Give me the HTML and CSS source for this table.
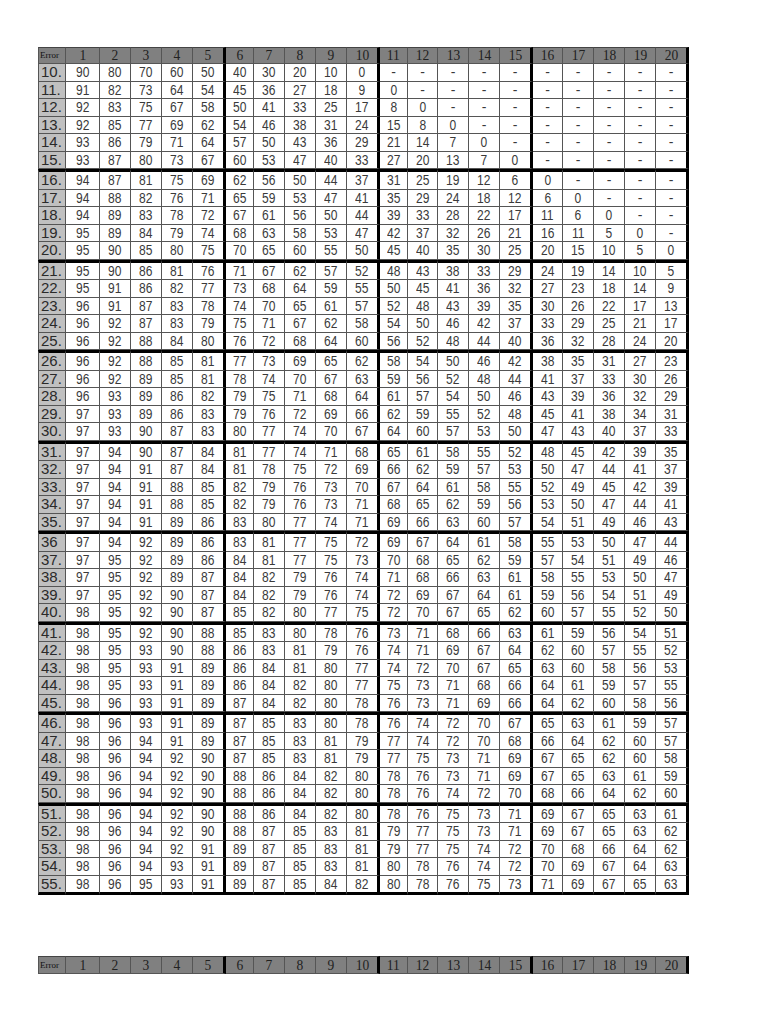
FILE: index.html
```
<!DOCTYPE html>
<html>
<head>
<meta charset="utf-8">
<link rel="stylesheet" href="styles.css">
</head>
<body>
<div class="page">
<table class="grid">
<colgroup><col class="w28"><col class="w34"><col class="w31"><col class="w31"><col class="w31"><col class="w33"><col class="w28"><col class="w31"><col class="w31"><col class="w31"><col class="w33"><col class="w28"><col class="w30"><col class="w31"><col class="w31"><col class="w33"><col class="w30"><col class="w31"><col class="w31"><col class="w31"><col class="w33"></colgroup>
<thead><tr><th class="err">Error</th><th><span>1</span></th><th><span>2</span></th><th><span>3</span></th><th><span>4</span></th><th><span>5</span></th><th><span>6</span></th><th><span>7</span></th><th><span>8</span></th><th><span>9</span></th><th><span>10</span></th><th><span>11</span></th><th><span>12</span></th><th><span>13</span></th><th><span>14</span></th><th><span>15</span></th><th><span>16</span></th><th><span>17</span></th><th><span>18</span></th><th><span>19</span></th><th><span>20</span></th></tr></thead>
<tbody>
<tr><th>10.</th><td><span>90</span></td><td><span>80</span></td><td><span>70</span></td><td><span>60</span></td><td><span>50</span></td><td><span>40</span></td><td><span>30</span></td><td><span>20</span></td><td><span>10</span></td><td><span>0</span></td><td>-</td><td>-</td><td>-</td><td>-</td><td>-</td><td>-</td><td>-</td><td>-</td><td>-</td><td>-</td></tr>
<tr><th>11.</th><td><span>91</span></td><td><span>82</span></td><td><span>73</span></td><td><span>64</span></td><td><span>54</span></td><td><span>45</span></td><td><span>36</span></td><td><span>27</span></td><td><span>18</span></td><td><span>9</span></td><td><span>0</span></td><td>-</td><td>-</td><td>-</td><td>-</td><td>-</td><td>-</td><td>-</td><td>-</td><td>-</td></tr>
<tr><th>12.</th><td><span>92</span></td><td><span>83</span></td><td><span>75</span></td><td><span>67</span></td><td><span>58</span></td><td><span>50</span></td><td><span>41</span></td><td><span>33</span></td><td><span>25</span></td><td><span>17</span></td><td><span>8</span></td><td><span>0</span></td><td>-</td><td>-</td><td>-</td><td>-</td><td>-</td><td>-</td><td>-</td><td>-</td></tr>
<tr><th>13.</th><td><span>92</span></td><td><span>85</span></td><td><span>77</span></td><td><span>69</span></td><td><span>62</span></td><td><span>54</span></td><td><span>46</span></td><td><span>38</span></td><td><span>31</span></td><td><span>24</span></td><td><span>15</span></td><td><span>8</span></td><td><span>0</span></td><td>-</td><td>-</td><td>-</td><td>-</td><td>-</td><td>-</td><td>-</td></tr>
<tr><th>14.</th><td><span>93</span></td><td><span>86</span></td><td><span>79</span></td><td><span>71</span></td><td><span>64</span></td><td><span>57</span></td><td><span>50</span></td><td><span>43</span></td><td><span>36</span></td><td><span>29</span></td><td><span>21</span></td><td><span>14</span></td><td><span>7</span></td><td><span>0</span></td><td>-</td><td>-</td><td>-</td><td>-</td><td>-</td><td>-</td></tr>
<tr><th>15.</th><td><span>93</span></td><td><span>87</span></td><td><span>80</span></td><td><span>73</span></td><td><span>67</span></td><td><span>60</span></td><td><span>53</span></td><td><span>47</span></td><td><span>40</span></td><td><span>33</span></td><td><span>27</span></td><td><span>20</span></td><td><span>13</span></td><td><span>7</span></td><td><span>0</span></td><td>-</td><td>-</td><td>-</td><td>-</td><td>-</td></tr>
</tbody>
<tbody>
<tr><th>16.</th><td><span>94</span></td><td><span>87</span></td><td><span>81</span></td><td><span>75</span></td><td><span>69</span></td><td><span>62</span></td><td><span>56</span></td><td><span>50</span></td><td><span>44</span></td><td><span>37</span></td><td><span>31</span></td><td><span>25</span></td><td><span>19</span></td><td><span>12</span></td><td><span>6</span></td><td><span>0</span></td><td>-</td><td>-</td><td>-</td><td>-</td></tr>
<tr><th>17.</th><td><span>94</span></td><td><span>88</span></td><td><span>82</span></td><td><span>76</span></td><td><span>71</span></td><td><span>65</span></td><td><span>59</span></td><td><span>53</span></td><td><span>47</span></td><td><span>41</span></td><td><span>35</span></td><td><span>29</span></td><td><span>24</span></td><td><span>18</span></td><td><span>12</span></td><td><span>6</span></td><td><span>0</span></td><td>-</td><td>-</td><td>-</td></tr>
<tr><th>18.</th><td><span>94</span></td><td><span>89</span></td><td><span>83</span></td><td><span>78</span></td><td><span>72</span></td><td><span>67</span></td><td><span>61</span></td><td><span>56</span></td><td><span>50</span></td><td><span>44</span></td><td><span>39</span></td><td><span>33</span></td><td><span>28</span></td><td><span>22</span></td><td><span>17</span></td><td><span>11</span></td><td><span>6</span></td><td><span>0</span></td><td>-</td><td>-</td></tr>
<tr><th>19.</th><td><span>95</span></td><td><span>89</span></td><td><span>84</span></td><td><span>79</span></td><td><span>74</span></td><td><span>68</span></td><td><span>63</span></td><td><span>58</span></td><td><span>53</span></td><td><span>47</span></td><td><span>42</span></td><td><span>37</span></td><td><span>32</span></td><td><span>26</span></td><td><span>21</span></td><td><span>16</span></td><td><span>11</span></td><td><span>5</span></td><td><span>0</span></td><td>-</td></tr>
<tr><th>20.</th><td><span>95</span></td><td><span>90</span></td><td><span>85</span></td><td><span>80</span></td><td><span>75</span></td><td><span>70</span></td><td><span>65</span></td><td><span>60</span></td><td><span>55</span></td><td><span>50</span></td><td><span>45</span></td><td><span>40</span></td><td><span>35</span></td><td><span>30</span></td><td><span>25</span></td><td><span>20</span></td><td><span>15</span></td><td><span>10</span></td><td><span>5</span></td><td><span>0</span></td></tr>
</tbody>
<tbody>
<tr><th>21.</th><td><span>95</span></td><td><span>90</span></td><td><span>86</span></td><td><span>81</span></td><td><span>76</span></td><td><span>71</span></td><td><span>67</span></td><td><span>62</span></td><td><span>57</span></td><td><span>52</span></td><td><span>48</span></td><td><span>43</span></td><td><span>38</span></td><td><span>33</span></td><td><span>29</span></td><td><span>24</span></td><td><span>19</span></td><td><span>14</span></td><td><span>10</span></td><td><span>5</span></td></tr>
<tr><th>22.</th><td><span>95</span></td><td><span>91</span></td><td><span>86</span></td><td><span>82</span></td><td><span>77</span></td><td><span>73</span></td><td><span>68</span></td><td><span>64</span></td><td><span>59</span></td><td><span>55</span></td><td><span>50</span></td><td><span>45</span></td><td><span>41</span></td><td><span>36</span></td><td><span>32</span></td><td><span>27</span></td><td><span>23</span></td><td><span>18</span></td><td><span>14</span></td><td><span>9</span></td></tr>
<tr><th>23.</th><td><span>96</span></td><td><span>91</span></td><td><span>87</span></td><td><span>83</span></td><td><span>78</span></td><td><span>74</span></td><td><span>70</span></td><td><span>65</span></td><td><span>61</span></td><td><span>57</span></td><td><span>52</span></td><td><span>48</span></td><td><span>43</span></td><td><span>39</span></td><td><span>35</span></td><td><span>30</span></td><td><span>26</span></td><td><span>22</span></td><td><span>17</span></td><td><span>13</span></td></tr>
<tr><th>24.</th><td><span>96</span></td><td><span>92</span></td><td><span>87</span></td><td><span>83</span></td><td><span>79</span></td><td><span>75</span></td><td><span>71</span></td><td><span>67</span></td><td><span>62</span></td><td><span>58</span></td><td><span>54</span></td><td><span>50</span></td><td><span>46</span></td><td><span>42</span></td><td><span>37</span></td><td><span>33</span></td><td><span>29</span></td><td><span>25</span></td><td><span>21</span></td><td><span>17</span></td></tr>
<tr><th>25.</th><td><span>96</span></td><td><span>92</span></td><td><span>88</span></td><td><span>84</span></td><td><span>80</span></td><td><span>76</span></td><td><span>72</span></td><td><span>68</span></td><td><span>64</span></td><td><span>60</span></td><td><span>56</span></td><td><span>52</span></td><td><span>48</span></td><td><span>44</span></td><td><span>40</span></td><td><span>36</span></td><td><span>32</span></td><td><span>28</span></td><td><span>24</span></td><td><span>20</span></td></tr>
</tbody>
<tbody>
<tr><th>26.</th><td><span>96</span></td><td><span>92</span></td><td><span>88</span></td><td><span>85</span></td><td><span>81</span></td><td><span>77</span></td><td><span>73</span></td><td><span>69</span></td><td><span>65</span></td><td><span>62</span></td><td><span>58</span></td><td><span>54</span></td><td><span>50</span></td><td><span>46</span></td><td><span>42</span></td><td><span>38</span></td><td><span>35</span></td><td><span>31</span></td><td><span>27</span></td><td><span>23</span></td></tr>
<tr><th>27.</th><td><span>96</span></td><td><span>92</span></td><td><span>89</span></td><td><span>85</span></td><td><span>81</span></td><td><span>78</span></td><td><span>74</span></td><td><span>70</span></td><td><span>67</span></td><td><span>63</span></td><td><span>59</span></td><td><span>56</span></td><td><span>52</span></td><td><span>48</span></td><td><span>44</span></td><td><span>41</span></td><td><span>37</span></td><td><span>33</span></td><td><span>30</span></td><td><span>26</span></td></tr>
<tr><th>28.</th><td><span>96</span></td><td><span>93</span></td><td><span>89</span></td><td><span>86</span></td><td><span>82</span></td><td><span>79</span></td><td><span>75</span></td><td><span>71</span></td><td><span>68</span></td><td><span>64</span></td><td><span>61</span></td><td><span>57</span></td><td><span>54</span></td><td><span>50</span></td><td><span>46</span></td><td><span>43</span></td><td><span>39</span></td><td><span>36</span></td><td><span>32</span></td><td><span>29</span></td></tr>
<tr><th>29.</th><td><span>97</span></td><td><span>93</span></td><td><span>89</span></td><td><span>86</span></td><td><span>83</span></td><td><span>79</span></td><td><span>76</span></td><td><span>72</span></td><td><span>69</span></td><td><span>66</span></td><td><span>62</span></td><td><span>59</span></td><td><span>55</span></td><td><span>52</span></td><td><span>48</span></td><td><span>45</span></td><td><span>41</span></td><td><span>38</span></td><td><span>34</span></td><td><span>31</span></td></tr>
<tr><th>30.</th><td><span>97</span></td><td><span>93</span></td><td><span>90</span></td><td><span>87</span></td><td><span>83</span></td><td><span>80</span></td><td><span>77</span></td><td><span>74</span></td><td><span>70</span></td><td><span>67</span></td><td><span>64</span></td><td><span>60</span></td><td><span>57</span></td><td><span>53</span></td><td><span>50</span></td><td><span>47</span></td><td><span>43</span></td><td><span>40</span></td><td><span>37</span></td><td><span>33</span></td></tr>
</tbody>
<tbody>
<tr><th>31.</th><td><span>97</span></td><td><span>94</span></td><td><span>90</span></td><td><span>87</span></td><td><span>84</span></td><td><span>81</span></td><td><span>77</span></td><td><span>74</span></td><td><span>71</span></td><td><span>68</span></td><td><span>65</span></td><td><span>61</span></td><td><span>58</span></td><td><span>55</span></td><td><span>52</span></td><td><span>48</span></td><td><span>45</span></td><td><span>42</span></td><td><span>39</span></td><td><span>35</span></td></tr>
<tr><th>32.</th><td><span>97</span></td><td><span>94</span></td><td><span>91</span></td><td><span>87</span></td><td><span>84</span></td><td><span>81</span></td><td><span>78</span></td><td><span>75</span></td><td><span>72</span></td><td><span>69</span></td><td><span>66</span></td><td><span>62</span></td><td><span>59</span></td><td><span>57</span></td><td><span>53</span></td><td><span>50</span></td><td><span>47</span></td><td><span>44</span></td><td><span>41</span></td><td><span>37</span></td></tr>
<tr><th>33.</th><td><span>97</span></td><td><span>94</span></td><td><span>91</span></td><td><span>88</span></td><td><span>85</span></td><td><span>82</span></td><td><span>79</span></td><td><span>76</span></td><td><span>73</span></td><td><span>70</span></td><td><span>67</span></td><td><span>64</span></td><td><span>61</span></td><td><span>58</span></td><td><span>55</span></td><td><span>52</span></td><td><span>49</span></td><td><span>45</span></td><td><span>42</span></td><td><span>39</span></td></tr>
<tr><th>34.</th><td><span>97</span></td><td><span>94</span></td><td><span>91</span></td><td><span>88</span></td><td><span>85</span></td><td><span>82</span></td><td><span>79</span></td><td><span>76</span></td><td><span>73</span></td><td><span>71</span></td><td><span>68</span></td><td><span>65</span></td><td><span>62</span></td><td><span>59</span></td><td><span>56</span></td><td><span>53</span></td><td><span>50</span></td><td><span>47</span></td><td><span>44</span></td><td><span>41</span></td></tr>
<tr><th>35.</th><td><span>97</span></td><td><span>94</span></td><td><span>91</span></td><td><span>89</span></td><td><span>86</span></td><td><span>83</span></td><td><span>80</span></td><td><span>77</span></td><td><span>74</span></td><td><span>71</span></td><td><span>69</span></td><td><span>66</span></td><td><span>63</span></td><td><span>60</span></td><td><span>57</span></td><td><span>54</span></td><td><span>51</span></td><td><span>49</span></td><td><span>46</span></td><td><span>43</span></td></tr>
</tbody>
<tbody>
<tr><th>36</th><td><span>97</span></td><td><span>94</span></td><td><span>92</span></td><td><span>89</span></td><td><span>86</span></td><td><span>83</span></td><td><span>81</span></td><td><span>77</span></td><td><span>75</span></td><td><span>72</span></td><td><span>69</span></td><td><span>67</span></td><td><span>64</span></td><td><span>61</span></td><td><span>58</span></td><td><span>55</span></td><td><span>53</span></td><td><span>50</span></td><td><span>47</span></td><td><span>44</span></td></tr>
<tr><th>37.</th><td><span>97</span></td><td><span>95</span></td><td><span>92</span></td><td><span>89</span></td><td><span>86</span></td><td><span>84</span></td><td><span>81</span></td><td><span>77</span></td><td><span>75</span></td><td><span>73</span></td><td><span>70</span></td><td><span>68</span></td><td><span>65</span></td><td><span>62</span></td><td><span>59</span></td><td><span>57</span></td><td><span>54</span></td><td><span>51</span></td><td><span>49</span></td><td><span>46</span></td></tr>
<tr><th>38.</th><td><span>97</span></td><td><span>95</span></td><td><span>92</span></td><td><span>89</span></td><td><span>87</span></td><td><span>84</span></td><td><span>82</span></td><td><span>79</span></td><td><span>76</span></td><td><span>74</span></td><td><span>71</span></td><td><span>68</span></td><td><span>66</span></td><td><span>63</span></td><td><span>61</span></td><td><span>58</span></td><td><span>55</span></td><td><span>53</span></td><td><span>50</span></td><td><span>47</span></td></tr>
<tr><th>39.</th><td><span>97</span></td><td><span>95</span></td><td><span>92</span></td><td><span>90</span></td><td><span>87</span></td><td><span>84</span></td><td><span>82</span></td><td><span>79</span></td><td><span>76</span></td><td><span>74</span></td><td><span>72</span></td><td><span>69</span></td><td><span>67</span></td><td><span>64</span></td><td><span>61</span></td><td><span>59</span></td><td><span>56</span></td><td><span>54</span></td><td><span>51</span></td><td><span>49</span></td></tr>
<tr><th>40.</th><td><span>98</span></td><td><span>95</span></td><td><span>92</span></td><td><span>90</span></td><td><span>87</span></td><td><span>85</span></td><td><span>82</span></td><td><span>80</span></td><td><span>77</span></td><td><span>75</span></td><td><span>72</span></td><td><span>70</span></td><td><span>67</span></td><td><span>65</span></td><td><span>62</span></td><td><span>60</span></td><td><span>57</span></td><td><span>55</span></td><td><span>52</span></td><td><span>50</span></td></tr>
</tbody>
<tbody>
<tr><th>41.</th><td><span>98</span></td><td><span>95</span></td><td><span>92</span></td><td><span>90</span></td><td><span>88</span></td><td><span>85</span></td><td><span>83</span></td><td><span>80</span></td><td><span>78</span></td><td><span>76</span></td><td><span>73</span></td><td><span>71</span></td><td><span>68</span></td><td><span>66</span></td><td><span>63</span></td><td><span>61</span></td><td><span>59</span></td><td><span>56</span></td><td><span>54</span></td><td><span>51</span></td></tr>
<tr><th>42.</th><td><span>98</span></td><td><span>95</span></td><td><span>93</span></td><td><span>90</span></td><td><span>88</span></td><td><span>86</span></td><td><span>83</span></td><td><span>81</span></td><td><span>79</span></td><td><span>76</span></td><td><span>74</span></td><td><span>71</span></td><td><span>69</span></td><td><span>67</span></td><td><span>64</span></td><td><span>62</span></td><td><span>60</span></td><td><span>57</span></td><td><span>55</span></td><td><span>52</span></td></tr>
<tr><th>43.</th><td><span>98</span></td><td><span>95</span></td><td><span>93</span></td><td><span>91</span></td><td><span>89</span></td><td><span>86</span></td><td><span>84</span></td><td><span>81</span></td><td><span>80</span></td><td><span>77</span></td><td><span>74</span></td><td><span>72</span></td><td><span>70</span></td><td><span>67</span></td><td><span>65</span></td><td><span>63</span></td><td><span>60</span></td><td><span>58</span></td><td><span>56</span></td><td><span>53</span></td></tr>
<tr><th>44.</th><td><span>98</span></td><td><span>95</span></td><td><span>93</span></td><td><span>91</span></td><td><span>89</span></td><td><span>86</span></td><td><span>84</span></td><td><span>82</span></td><td><span>80</span></td><td><span>77</span></td><td><span>75</span></td><td><span>73</span></td><td><span>71</span></td><td><span>68</span></td><td><span>66</span></td><td><span>64</span></td><td><span>61</span></td><td><span>59</span></td><td><span>57</span></td><td><span>55</span></td></tr>
<tr><th>45.</th><td><span>98</span></td><td><span>96</span></td><td><span>93</span></td><td><span>91</span></td><td><span>89</span></td><td><span>87</span></td><td><span>84</span></td><td><span>82</span></td><td><span>80</span></td><td><span>78</span></td><td><span>76</span></td><td><span>73</span></td><td><span>71</span></td><td><span>69</span></td><td><span>66</span></td><td><span>64</span></td><td><span>62</span></td><td><span>60</span></td><td><span>58</span></td><td><span>56</span></td></tr>
</tbody>
<tbody>
<tr><th>46.</th><td><span>98</span></td><td><span>96</span></td><td><span>93</span></td><td><span>91</span></td><td><span>89</span></td><td><span>87</span></td><td><span>85</span></td><td><span>83</span></td><td><span>80</span></td><td><span>78</span></td><td><span>76</span></td><td><span>74</span></td><td><span>72</span></td><td><span>70</span></td><td><span>67</span></td><td><span>65</span></td><td><span>63</span></td><td><span>61</span></td><td><span>59</span></td><td><span>57</span></td></tr>
<tr><th>47.</th><td><span>98</span></td><td><span>96</span></td><td><span>94</span></td><td><span>91</span></td><td><span>89</span></td><td><span>87</span></td><td><span>85</span></td><td><span>83</span></td><td><span>81</span></td><td><span>79</span></td><td><span>77</span></td><td><span>74</span></td><td><span>72</span></td><td><span>70</span></td><td><span>68</span></td><td><span>66</span></td><td><span>64</span></td><td><span>62</span></td><td><span>60</span></td><td><span>57</span></td></tr>
<tr><th>48.</th><td><span>98</span></td><td><span>96</span></td><td><span>94</span></td><td><span>92</span></td><td><span>90</span></td><td><span>87</span></td><td><span>85</span></td><td><span>83</span></td><td><span>81</span></td><td><span>79</span></td><td><span>77</span></td><td><span>75</span></td><td><span>73</span></td><td><span>71</span></td><td><span>69</span></td><td><span>67</span></td><td><span>65</span></td><td><span>62</span></td><td><span>60</span></td><td><span>58</span></td></tr>
<tr><th>49.</th><td><span>98</span></td><td><span>96</span></td><td><span>94</span></td><td><span>92</span></td><td><span>90</span></td><td><span>88</span></td><td><span>86</span></td><td><span>84</span></td><td><span>82</span></td><td><span>80</span></td><td><span>78</span></td><td><span>76</span></td><td><span>73</span></td><td><span>71</span></td><td><span>69</span></td><td><span>67</span></td><td><span>65</span></td><td><span>63</span></td><td><span>61</span></td><td><span>59</span></td></tr>
<tr><th>50.</th><td><span>98</span></td><td><span>96</span></td><td><span>94</span></td><td><span>92</span></td><td><span>90</span></td><td><span>88</span></td><td><span>86</span></td><td><span>84</span></td><td><span>82</span></td><td><span>80</span></td><td><span>78</span></td><td><span>76</span></td><td><span>74</span></td><td><span>72</span></td><td><span>70</span></td><td><span>68</span></td><td><span>66</span></td><td><span>64</span></td><td><span>62</span></td><td><span>60</span></td></tr>
</tbody>
<tbody>
<tr><th>51.</th><td><span>98</span></td><td><span>96</span></td><td><span>94</span></td><td><span>92</span></td><td><span>90</span></td><td><span>88</span></td><td><span>86</span></td><td><span>84</span></td><td><span>82</span></td><td><span>80</span></td><td><span>78</span></td><td><span>76</span></td><td><span>75</span></td><td><span>73</span></td><td><span>71</span></td><td><span>69</span></td><td><span>67</span></td><td><span>65</span></td><td><span>63</span></td><td><span>61</span></td></tr>
<tr><th>52.</th><td><span>98</span></td><td><span>96</span></td><td><span>94</span></td><td><span>92</span></td><td><span>90</span></td><td><span>88</span></td><td><span>87</span></td><td><span>85</span></td><td><span>83</span></td><td><span>81</span></td><td><span>79</span></td><td><span>77</span></td><td><span>75</span></td><td><span>73</span></td><td><span>71</span></td><td><span>69</span></td><td><span>67</span></td><td><span>65</span></td><td><span>63</span></td><td><span>62</span></td></tr>
<tr><th>53.</th><td><span>98</span></td><td><span>96</span></td><td><span>94</span></td><td><span>92</span></td><td><span>91</span></td><td><span>89</span></td><td><span>87</span></td><td><span>85</span></td><td><span>83</span></td><td><span>81</span></td><td><span>79</span></td><td><span>77</span></td><td><span>75</span></td><td><span>74</span></td><td><span>72</span></td><td><span>70</span></td><td><span>68</span></td><td><span>66</span></td><td><span>64</span></td><td><span>62</span></td></tr>
<tr><th>54.</th><td><span>98</span></td><td><span>96</span></td><td><span>94</span></td><td><span>93</span></td><td><span>91</span></td><td><span>89</span></td><td><span>87</span></td><td><span>85</span></td><td><span>83</span></td><td><span>81</span></td><td><span>80</span></td><td><span>78</span></td><td><span>76</span></td><td><span>74</span></td><td><span>72</span></td><td><span>70</span></td><td><span>69</span></td><td><span>67</span></td><td><span>64</span></td><td><span>63</span></td></tr>
<tr><th>55.</th><td><span>98</span></td><td><span>96</span></td><td><span>95</span></td><td><span>93</span></td><td><span>91</span></td><td><span>89</span></td><td><span>87</span></td><td><span>85</span></td><td><span>84</span></td><td><span>82</span></td><td><span>80</span></td><td><span>78</span></td><td><span>76</span></td><td><span>75</span></td><td><span>73</span></td><td><span>71</span></td><td><span>69</span></td><td><span>67</span></td><td><span>65</span></td><td><span>63</span></td></tr>
</tbody>
</table>

<table class="grid legend">
<colgroup><col class="w28"><col class="w34"><col class="w31"><col class="w31"><col class="w31"><col class="w33"><col class="w28"><col class="w31"><col class="w31"><col class="w31"><col class="w33"><col class="w28"><col class="w30"><col class="w31"><col class="w31"><col class="w33"><col class="w30"><col class="w31"><col class="w31"><col class="w31"><col class="w33"></colgroup>
<thead><tr><th class="err">Error</th><th><span>1</span></th><th><span>2</span></th><th><span>3</span></th><th><span>4</span></th><th><span>5</span></th><th><span>6</span></th><th><span>7</span></th><th><span>8</span></th><th><span>9</span></th><th><span>10</span></th><th><span>11</span></th><th><span>12</span></th><th><span>13</span></th><th><span>14</span></th><th><span>15</span></th><th><span>16</span></th><th><span>17</span></th><th><span>18</span></th><th><span>19</span></th><th><span>20</span></th></tr></thead>
</table>
</div>
</body>
</html>
```

FILE: styles.css
```
html, body {
  margin: 0;
  background: #ffffff;
}

body {
  font-family: "Liberation Sans", Arial, sans-serif;
  color: #3a3a3a;
}

.page {
  padding: 47px 0 0 38px;
}

.grid {
  border-collapse: separate;
  border-spacing: 0;
  table-layout: fixed;
  width: 651px;
  font-size: 14px;
}

.w28 { width: 28px; }
.w30 { width: 30px; }
.w31 { width: 31px; }
.w33 { width: 33px; }
.w34 { width: 34px; }

.grid th,
.grid td {
  padding: 0;
  border-right: 1px solid #555555;
  border-bottom: 1px solid #555555;
  text-align: center;
  line-height: 16.5px;
  font-weight: normal;
  white-space: nowrap;
  overflow: hidden;
}

.grid th span,
.grid td span {
  display: inline-block;
  transform: scaleX(0.86);
}

.grid tr > :first-child {
  border-left: 1px solid #555555;
}

.grid tr > :nth-child(6),
.grid tr > :nth-child(11),
.grid tr > :nth-child(16),
.grid tr > :nth-child(21) {
  border-right: 3px solid #000000;
}

.grid thead th {
  background: #808080;
  color: #222222;
  border-top: 1px solid #444444;
  line-height: 15px;
  font-family: "Liberation Serif", "Times New Roman", serif;
  font-size: 15px;
}

.grid thead th span {
  transform: scaleX(0.9);
}

.grid thead th.err {
  font-size: 9px;
  text-align: left;
  padding-left: 1px;
  color: #111111;
  vertical-align: bottom;
  padding-bottom: 2px;
  line-height: 11px;
}

.grid tbody th {
  background: #c0c0c0;
  text-align: left;
  padding-left: 2px;
  color: #2a2a2a;
  font-size: 15px;
}

.grid tbody + tbody tr:first-child > * {
  border-top: 3px solid #000000;
}

.grid tbody:last-child tr:last-child > * {
  border-bottom: 3px solid #000000;
}

.legend {
  margin-top: 61px;
}

.legend thead th {
  line-height: 16px;
}
```
